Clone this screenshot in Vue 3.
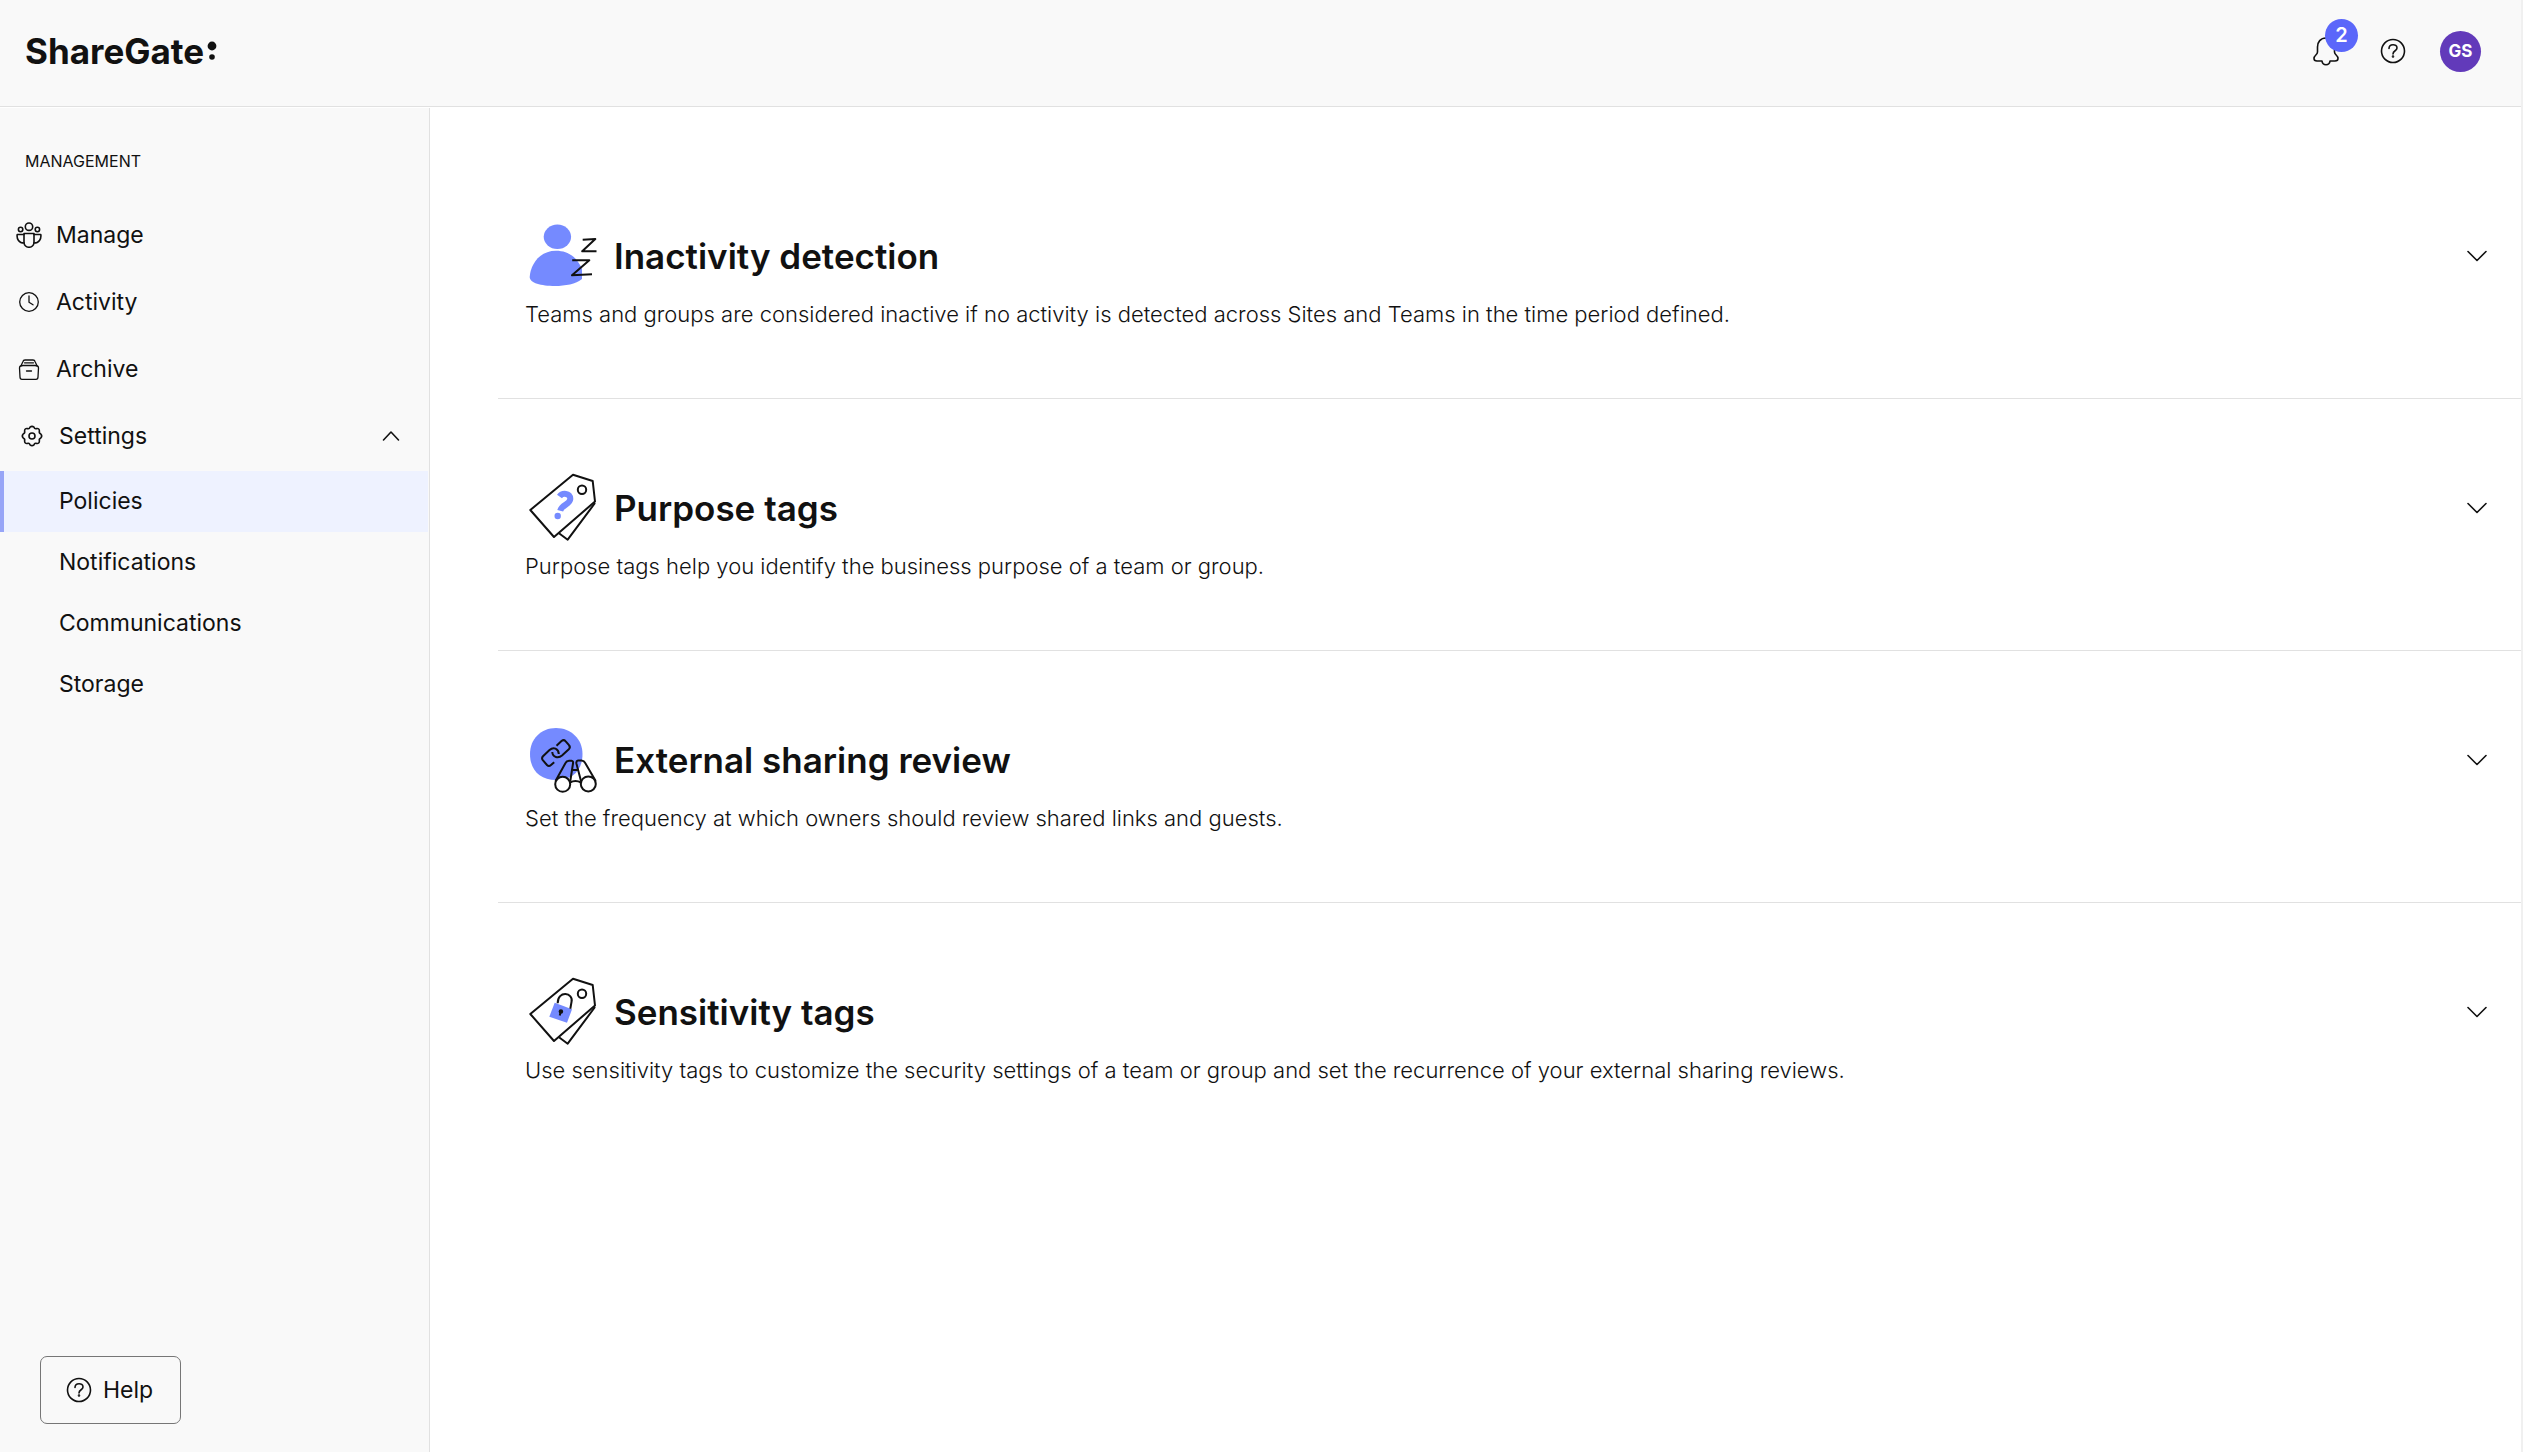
<script setup>
import { ref } from 'vue'

const settingsOpen = ref(true)
const openPolicy = ref('')

const settingsLinks = ['Policies', 'Notifications', 'Communications', 'Storage']

const policies = [
  {
    id: 'inactivity',
    title: 'Inactivity detection',
    text: 'Teams and groups are considered inactive if no activity is detected across Sites and Teams in the time period defined.',
  },
  {
    id: 'purpose',
    title: 'Purpose tags',
    text: 'Purpose tags help you identify the business purpose of a team or group.',
  },
  {
    id: 'sharing',
    title: 'External sharing review',
    text: 'Set the frequency at which owners should review shared links and guests.',
  },
  {
    id: 'sensitivity',
    title: 'Sensitivity tags',
    text: 'Use sensitivity tags to customize the security settings of a team or group and set the recurrence of your external sharing reviews.',
  },
]

function toggle(id) {
  openPolicy.value = openPolicy.value === id ? '' : id
}
</script>

<template>
  <div class="app">
    <header class="topbar">
      <a class="logo" href="#" aria-label="ShareGate">
        <span>ShareGate</span>
        <svg width="10" height="24" viewBox="0 0 10 24" aria-hidden="true">
          <circle cx="5" cy="7" r="4.4" fill="#111" />
          <circle cx="5" cy="18" r="2.8" fill="#111" />
        </svg>
      </a>
      <div class="tools">
        <button class="tool bell" aria-label="Notifications">
          <svg width="28" height="30" viewBox="0 0 28 30" class="line">
            <path d="M14 2C8.500 2 5.500 6 5.500 11V16C5.500 19 2 19 2 22.500C2 24.500 3.500 25 5 25H10C10.500 30 17.500 30 18 25H23C24.500 25 26 24.500 26 22.500C26 19 22.500 19 22.500 16V11C22.500 6 19.500 2 14 2Z" />
          </svg>
          <span class="badge">2</span>
        </button>
        <button class="tool" aria-label="Help">
          <svg width="26" height="26" viewBox="0 0 26 26" class="line">
            <circle cx="13" cy="13" r="11.500" />
            <path d="M9 10.500C9 5.500 17 5.500 17 10C17 13 13 12.500 13 16" />
            <circle cx="13" cy="18.500" r=".5" />
          </svg>
        </button>
        <button class="avatar" aria-label="Account">GS</button>
      </div>
    </header>

    <div class="body">
      <aside class="sidebar">
        <nav>
          <h2 class="heading">MANAGEMENT</h2>
          <a class="item" href="#">
            <svg width="26" height="26" viewBox="0 0 26 26" class="line">
              <circle cx="13" cy="4.700" r="3.700" />
              <circle cx="4.600" cy="7.500" r="2.200" />
              <circle cx="21.400" cy="7.500" r="2.200" />
              <path d="M8 11.500H18V20C18 27 8 27 8 20Z" />
              <path d="M8 12.500H1.200C.5 17 3 21 8 21M18 12.500H24.800C25.500 17 23 21 18 21" />
            </svg>
            <span>Manage</span>
          </a>
          <a class="item" href="#">
            <svg width="26" height="26" viewBox="0 0 26 26" class="line thin">
              <circle cx="13" cy="13" r="9.300" />
              <path d="M13 7V13.200L17 15.800" />
            </svg>
            <span>Activity</span>
          </a>
          <a class="item" href="#">
            <svg width="26" height="26" viewBox="0 0 26 26" class="line thin">
              <path d="M3.500 12C3.500 10 5.500 9.500 7 9.500H19C20.500 9.500 22.500 10 22.500 12L22 21C22 22.500 21.500 23.300 20 23.300H6C4.500 23.300 4 22.500 4 21Z" />
              <path d="M5 9.800L7 5.500C7.300 4.200 8 4 9 4H17C18 4 18.700 4.200 19 5.500L21 9.800M8.500 6.800H17.500M10.500 15H15.500" />
            </svg>
            <span>Archive</span>
          </a>
          <button class="item settings" :aria-expanded="settingsOpen" @click="settingsOpen = !settingsOpen">
            <svg width="26" height="26" viewBox="0 0 26 26" class="line">
              <circle cx="13" cy="13" r="3" />
              <path d="M11 4.200Q13 2.600 15 4.200Q15.600 6.200 17.600 5.600Q20.400 5.200 20.400 8Q19.800 10.200 21.800 11Q23.600 13 21.800 15Q19.800 15.800 20.400 18Q20.400 20.800 17.600 20.400Q15.600 19.800 15 21.800Q13 23.400 11 21.800Q10.400 19.800 8.400 20.400Q5.600 20.800 5.600 18Q6.200 15.800 4.200 15Q2.400 13 4.200 11Q6.200 10.200 5.600 8Q5.600 5.200 8.400 5.600Q10.400 6.200 11 4.200Z" />
            </svg>
            <span>Settings</span>
            <svg class="line caret" width="18" height="12" viewBox="0 0 18 12">
              <path d="M1.500 10L9 2L16.500 10" />
            </svg>
          </button>
          <ul v-show="settingsOpen" class="sub">
            <li v-for="(name, i) in settingsLinks" :key="name">
              <a href="#" :class="{ active: i === 0 }">{{ name }}</a>
            </li>
          </ul>
        </nav>
        <button class="help">
          <svg width="26" height="26" viewBox="0 0 26 26" class="line">
            <circle cx="13" cy="13" r="11.500" />
            <path d="M9 10.500C9 5.500 17 5.500 17 10C17 13 13 12.500 13 16" />
            <circle cx="13" cy="18.500" r=".5" />
          </svg>
          <span>Help</span>
        </button>
      </aside>

      <main class="content">
        <section v-for="p in policies" :key="p.id" class="policy">
          <h2>
            <button class="title" :aria-expanded="openPolicy === p.id" @click="toggle(p.id)">
              <svg v-if="p.id === 'inactivity'" class="art" width="72" height="72" viewBox="0 0 72 72">
                <ellipse cx="30.400" cy="16.800" rx="13.700" ry="12.200" fill="#758aff" />
                <path d="M2.700 57C3.500 44 13 30.700 29 30.700C44 30.700 51 40 55 49V59C49 64 38 66 28 66C14 66 2.700 63 2.700 57Z" fill="#758aff" />
                <path d="M55.700 19.800L68.300 19L55.200 31.300H69.500M45.200 40.300H62.300L45 55.300L65 54.300" />
              </svg>
              <svg v-else-if="p.id === 'sharing'" class="art" width="72" height="72" viewBox="0 0 72 72">
                <path d="M29 4C44 4 55.500 15 55.500 30C55.500 47 45 56 29 56C13 56 3 46 3 30C3 15 14 4 29 4Z" fill="#758aff" />
                <path d="M29.500 21.700L34.500 17C36 15.800 37.500 16 38.500 17.200L42 21.200C43.200 22.500 43 24 41.800 25.200L35 31.500C31.500 34.500 25.500 33.500 25.300 28" />
                <path d="M27.200 38.200L24 41C22.500 42.300 21 42 20 41L15.800 36.200C14.700 34.700 14.800 33.500 16 32.200L22.500 26C26.500 22.500 31.500 24.500 31.800 30" />
                <path d="M28.500 57L38.500 39Q39.500 36.800 42 36.800H44.500Q46.500 37 46 39.500L43.300 57" />
                <path d="M68.700 57L58.200 39Q57.200 36.800 54.500 36.500H51Q49 36.800 49.400 39.500L54 57M46 46H50.500M43 58.500Q48.500 55.500 54 58.500" />
                <circle cx="35.700" cy="60.300" r="7.500" fill="#fff" />
                <circle cx="61.300" cy="59.900" r="7.500" fill="#fff" />
              </svg>
              <svg v-else class="art" width="72" height="72" viewBox="0 0 72 72">
                <path d="M3.300 38L46 2.700L65.700 9L68 29.500L27 65Z" />
                <path d="M32 61.300L40.700 67.700L68 31" />
                <circle cx="55" cy="17.700" r="4.200" />
                <template v-if="p.id === 'purpose'">
                  <path class="mark" d="M32.500 24.500C35 20.800 43.500 20.500 43.300 27C43 32.500 35 32.500 33.200 38.800" />
                  <circle class="dot" cx="30.700" cy="44" r="3.200" />
                </template>
                <template v-else>
                  <path class="dot" d="M27.700 26.700L45 33.300L40 46.700L22.300 40.700Z" />
                  <path d="M30.700 27.300C30.500 14 47 16.500 44.500 26L43.300 32.700M33.700 36L32.700 39.500" />
                  <circle cx="33.900" cy="35.500" r="1.300" fill="#111" />
                </template>
              </svg>
              <span>{{ p.title }}</span>
              <svg class="line caret" width="20" height="12" viewBox="0 0 20 12">
                <path d="M1 1.500L10 10.500L19 1.500" />
              </svg>
            </button>
          </h2>
          <p>{{ p.text }}</p>
        </section>
      </main>
    </div>
  </div>
</template>

<style>
body {
  margin: 0;
}
</style>

<style scoped>
.app {
  box-sizing: border-box;
  min-height: 100vh;
  display: flex;
  flex-direction: column;
  border-right: 2px solid #f0f0f0;
  background: #fff;
  color: #111;
  font-family: Inter, "Liberation Sans", sans-serif;
}
button {
  font: inherit;
  color: inherit;
  background: none;
  border: 0;
  padding: 0;
  cursor: pointer;
}
a {
  color: inherit;
  text-decoration: none;
}
svg {
  flex: none;
}
.line {
  fill: none;
  stroke: #111;
  stroke-width: 1.6;
  stroke-linecap: round;
  stroke-linejoin: round;
}
.thin {
  stroke-width: 1.3;
}

.topbar {
  display: flex;
  align-items: center;
  justify-content: space-between;
  height: 102px;
  padding: 0 40px 4px 25px;
  background: #f9f9f9;
  border-bottom: 1px solid #e1e1e1;
}
.logo {
  display: flex;
  align-items: center;
  gap: 3px;
  font-size: 35px;
  font-weight: 700;
  line-height: 40px;
}
.tools {
  display: flex;
  align-items: center;
}
.tool {
  display: flex;
  position: relative;
  margin-right: 40px;
}
.badge {
  position: absolute;
  left: 13px;
  top: -17px;
  width: 33px;
  height: 33px;
  border-radius: 50%;
  background: #5b67fa;
  color: #fff;
  font-size: 20px;
  font-weight: 600;
  line-height: 33px;
  text-align: center;
}
.tool + .avatar {
  margin-left: -6px;
}
.avatar {
  width: 41px;
  height: 41px;
  border-radius: 50%;
  background: #623aba;
  color: #fff;
  font-size: 17px;
  font-weight: 700;
}

.body {
  flex: 1;
  display: flex;
  padding-top: 1px;
}
.sidebar {
  box-sizing: border-box;
  flex: none;
  width: 430px;
  display: flex;
  flex-direction: column;
  justify-content: space-between;
  align-items: stretch;
  padding-bottom: 28px;
  background: #f9f9f9;
  border-right: 1px solid #e1e1e1;
}
.heading {
  margin: 0;
  padding: 42px 25px 29px;
  font-size: 16px;
  font-weight: 400;
  line-height: 22px;
}
.item {
  box-sizing: border-box;
  display: flex;
  align-items: center;
  gap: 14px;
  width: 100%;
  height: 67px;
  padding: 0 29px 0 16px;
  font-size: 23px;
}
.settings {
  margin-bottom: 2px;
  padding-left: 19px;
}
.caret {
  margin-left: auto;
}
.sub {
  margin: 0;
  padding: 0;
  list-style: none;
}
.sub a {
  display: block;
  margin-right: 1px;
  padding-left: 55px;
  border-left: 4px solid transparent;
  font-size: 23px;
  line-height: 61px;
}
.sub .active {
  background: #eef2ff;
  border-left-color: #97a5f7;
}
.help {
  box-sizing: border-box;
  align-self: flex-start;
  display: flex;
  align-items: center;
  gap: 11px;
  height: 68px;
  margin-left: 40px;
  padding: 0 27px 0 25px;
  border: 1px solid #767676;
  border-radius: 7px;
  font-size: 23px;
}

.content {
  flex: 1;
  min-width: 0;
  padding: 39px 0 0 68px;
}
.policy {
  padding: 73px 34px 66px 27px;
  border-bottom: 1px solid #e1e1e1;
}
.policy:last-child {
  border-bottom: 0;
}
.policy h2 {
  margin: 0;
  font-size: 35px;
  font-weight: 600;
}
.title {
  display: flex;
  align-items: center;
  width: 100%;
  height: 72px;
  padding-left: 2px;
  gap: 15px;
  text-align: left;
}
.art {
  fill: none;
  stroke: #111;
  stroke-width: 2;
  stroke-linejoin: round;
}
.art [fill="#758aff"],
.art .dot {
  fill: #758aff;
  stroke: none;
}
.art .mark {
  stroke: #758aff;
  stroke-width: 6;
}
.policy p {
  margin: 4px 0 0;
  font-size: 22px;
  font-weight: 300;
  line-height: 36px;
}
</style>
